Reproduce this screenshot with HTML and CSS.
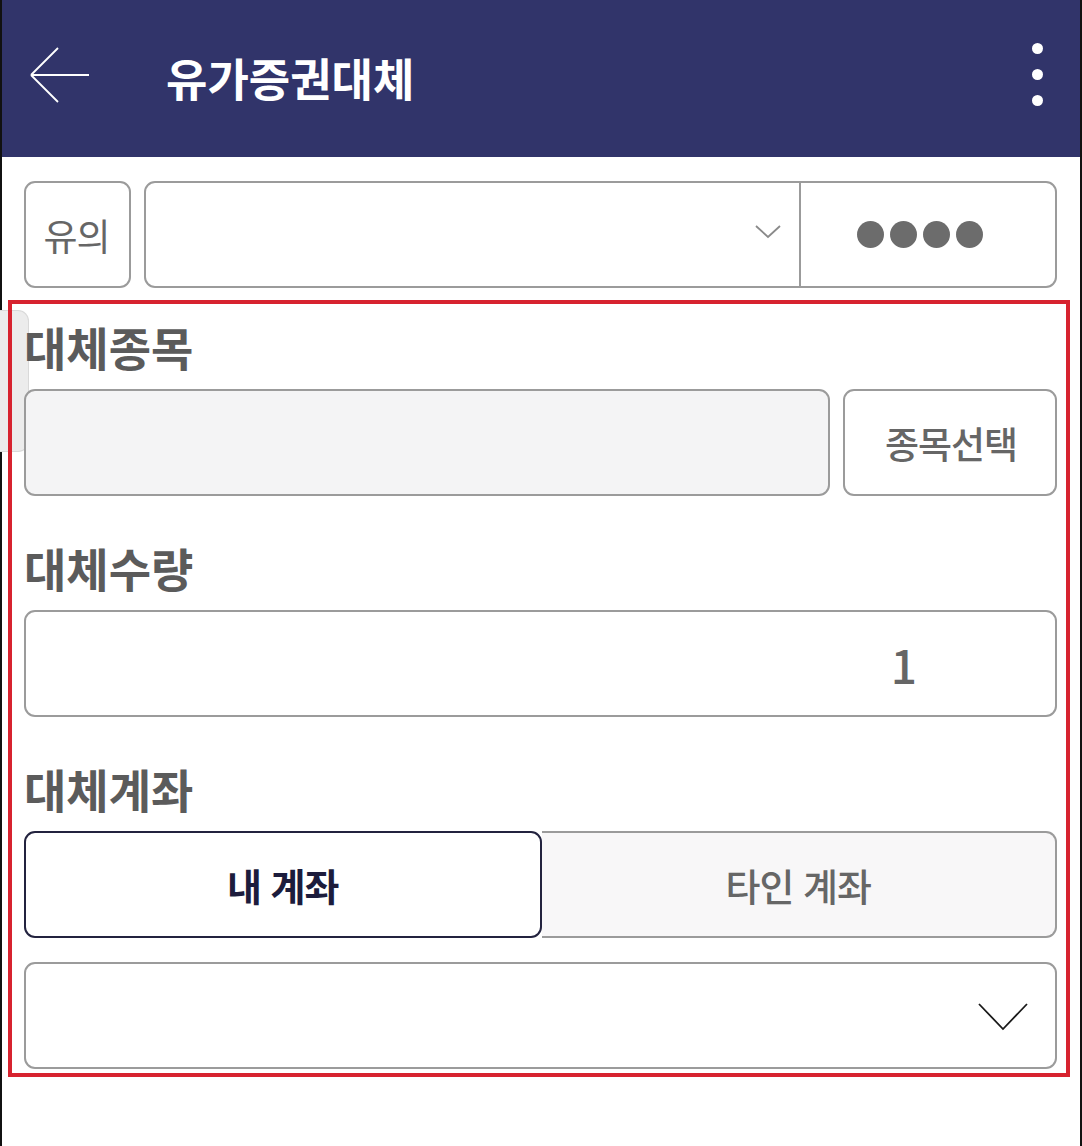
FILE: index.html
```html
<!DOCTYPE html>
<html lang="ko">
<head>
<meta charset="utf-8">
<title>유가증권대체</title>
<link rel="stylesheet" href="styles.css">
</head>
<body>
<div class="app">
  <header class="topbar">
    <svg class="back" width="62" height="58" viewBox="0 0 62 58" aria-hidden="true">
      <path d="M2 29 H60 M2 29 L29 2 M2 29 L29 56" fill="none" stroke="#fff" stroke-width="1.8"/>
    </svg>
    <h1 class="title">유가증권대체</h1>
    <div class="kebab"><span></span><span></span><span></span></div>
  </header>

  <div class="account-row">
    <button class="btn-note">유의</button>
    <div class="account-box">
      <div class="account-select">
        <svg width="26" height="14" viewBox="0 0 26 14" aria-hidden="true">
          <path d="M1 1 L13 12 L25 1" fill="none" stroke="#8a8a8a" stroke-width="1.8"/>
        </svg>
      </div>
      <div class="pw"><span></span><span></span><span></span><span></span></div>
    </div>
  </div>

  <div class="side-handle"></div>

  <section class="form">
    <div class="group first">
      <h2 class="label">대체종목</h2>
      <div class="field-row">
        <div class="field readonly"></div>
        <button class="btn-pick">종목선택</button>
      </div>
    </div>

    <div class="group">
      <h2 class="label">대체수량</h2>
      <div class="field qty">1</div>
    </div>

    <div class="group">
      <h2 class="label">대체계좌</h2>
      <div class="tabs">
        <button class="tab active">내 계좌</button>
        <button class="tab">타인 계좌</button>
      </div>
      <div class="field dropdown">
        <svg width="50" height="28" viewBox="0 0 50 28" aria-hidden="true">
          <path d="M1 1 L25 26 L49 1" fill="none" stroke="#1a1a1a" stroke-width="1.8"/>
        </svg>
      </div>
    </div>
  </section>
</div>
</body>
</html>
```

FILE: styles.css
```css
* { box-sizing: border-box; }
html, body { margin: 0; padding: 0; background: #fff; }
body { font-family: "Noto Sans CJK KR", "Noto Sans", sans-serif; }

.app {
  position: relative;
  min-height: 1146px;
  border-left: 2px solid #111;
  border-right: 2px solid #111;
  background: #fff;
}

.topbar {
  height: 157px;
  background: #31346a;
  display: flex;
  align-items: center;
  padding: 0 37px 0 27px;
}
.back { display: block; margin-top: -8px; }
.title {
  margin: -2px 0 0 75px;
  color: #fff;
  font-size: 45px;
  font-weight: 700;
  letter-spacing: 0;
  line-height: 1;
}
.kebab {
  margin-left: auto;
  display: flex;
  flex-direction: column;
  gap: 15px;
  margin-top: -9px;
}
.kebab span {
  width: 11px; height: 11px; border-radius: 50%; background: #fff; display: block;
}

.account-row {
  display: flex;
  gap: 13px;
  margin: 24px 23px 0 22px;
  height: 107px;
}
button {
  font-family: inherit;
  background: #fff;
  cursor: pointer;
}
.btn-note {
  width: 107px;
  height: 107px;
  border: 2px solid #9b9b9b;
  border-radius: 11px;
  color: #666;
  font-size: 37px;
  letter-spacing: -1px;
  padding: 0 2px 0 0;
}
.account-box {
  flex: 1;
  display: flex;
  border: 2px solid #9b9b9b;
  border-radius: 11px;
}
.account-select {
  flex: 1;
  display: flex;
  align-items: center;
  justify-content: flex-end;
  padding: 0 18px 6px 0;
  border-right: 2px solid #9b9b9b;
}
.account-select svg { display: block; }
.pw {
  width: 254px;
  display: flex;
  justify-content: center;
  align-items: center;
  gap: 6px;
  padding-right: 16px;
}
.pw span {
  width: 27px; height: 27px; border-radius: 50%; background: #6c6c6c; display: block;
}

.side-handle {
  position: absolute;
  left: -2px;
  top: 310px;
  width: 29px;
  height: 142px;
  background: #ececec;
  border: 1px solid #d9d9d9;
  border-left: none;
  border-radius: 0 11px 11px 0;
  z-index: 0;
}

.form {
  position: relative;
  z-index: 1;
  margin: 12px 10px 0 6px;
  border: 4px solid #d7232f;
  padding: 17px 9px 4px 12px;
}
.group { margin-top: 46px; }
.group.first { margin-top: 0; }
.label {
  margin: 0 0 18px 0;
  height: 50px;
  line-height: 50px;
  font-size: 46px;
  font-weight: 700;
  color: #5b5b5b;
  letter-spacing: 0;
  padding-left: 0;
}
.field-row { display: flex; gap: 13px; }
.field {
  height: 107px;
  border: 2px solid #9b9b9b;
  border-radius: 11px;
  background: #fff;
}
.field.readonly { flex: 1; background: #f4f4f5; }
.btn-pick {
  width: 214px;
  height: 107px;
  border: 2px solid #9b9b9b;
  border-radius: 11px;
  color: #666;
  font-size: 37px;
  letter-spacing: -1px;
  font-weight: 500;
  padding: 0 0 0 2px;
}
.qty {
  display: flex;
  align-items: center;
  justify-content: flex-end;
  padding-right: 138px;
  font-size: 46px;
  font-weight: 500;
  color: #666;
}
.tabs {
  display: flex;
  height: 107px;
  margin-bottom: 24px;
}
.tab {
  flex: 1;
  height: 107px;
  font-size: 38px;
  letter-spacing: -1px;
  color: #666;
  font-weight: 500;
  background: #f8f7f8;
  border: 2px solid #9b9b9b;
  border-left: none;
  border-radius: 0 11px 11px 0;
}
.tab.active {
  background: #fff;
  color: #1c1c3c;
  font-weight: 700;
  border: 2px solid #23233f;
  border-radius: 11px;
}
.dropdown {
  display: flex;
  align-items: center;
  justify-content: flex-end;
  padding: 0 27px 0 0;
}
.dropdown svg { display: block; margin-top: 2px; }
```
